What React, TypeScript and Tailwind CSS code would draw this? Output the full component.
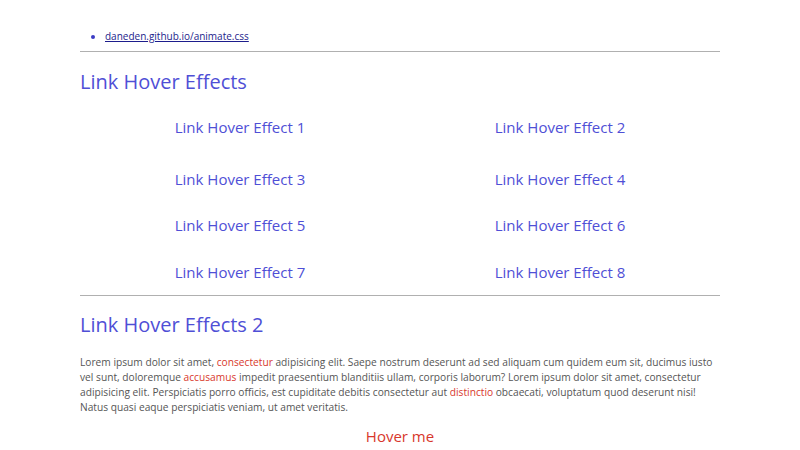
import React from 'react';

const effects = [1, 2, 3, 4, 5, 6, 7, 8];

// rows are not evenly spaced on the demo page, each row keeps its own height
const rowHeights = ['h-[52px]', 'h-[46px]', 'h-[47px]', 'h-[46px]'];

export default function App() {
  const rows = [0, 1, 2, 3].map(i => effects.slice(i * 2, i * 2 + 2));

  return (
    <div className="min-h-[450px] bg-white font-['Open_Sans',sans-serif] overflow-hidden">
      <div className="w-[640px] mx-auto">
        <ul className="list-disc pl-[25px] pt-[28px] text-[10px] leading-[16px] text-[#3b3bc4] marker:text-[#3b3bc4]">
          <li>
            <a href="#" className="underline text-[#1d1d8c]">daneden.github.io/animate.css</a>
          </li>
        </ul>
        <hr className="mt-[7px] border-t border-[#b0b0b0]" />

        <h2 className="mt-[16px] text-[20px] leading-[28px] text-[#4f4fd6]">Link Hover Effects</h2>

        <div className="mt-[20px]">
          {rows.map((pair, i) => (
            <div key={i} className={`grid grid-cols-2 ${rowHeights[i]}`}>
              {pair.map(n => (
                <div key={n} className="flex justify-center">
                  <a href="#" className="text-[15px] leading-[22px] text-[#4f4fd6]">
                    Link Hover Effect {n}
                  </a>
                </div>
              ))}
            </div>
          ))}
        </div>

        <hr className="mt-[-12px] border-t border-[#b0b0b0]" />

        <h2 className="mt-[15px] text-[20px] leading-[28px] text-[#4f4fd6]">Link Hover Effects 2</h2>

        <p className="mt-[16px] text-[10.2px] leading-[15px] text-[#555]">
          Lorem ipsum dolor sit amet, <a href="#" className="text-[#d8372c]">consectetur</a> adipisicing elit. Saepe
          nostrum deserunt ad sed aliquam cum quidem eum sit, ducimus iusto vel sunt, doloremque{' '}
          <a href="#" className="text-[#d8372c]">accusamus</a> impedit praesentium blanditiis ullam, corporis laborum?
          Lorem ipsum dolor sit amet, consectetur adipisicing elit. Perspiciatis porro officis, est cupiditate debitis
          consectetur aut <a href="#" className="text-[#d8372c]">distinctio</a> obcaecati, voluptatum quod deserunt nisi!
          Natus quasi eaque perspiciatis veniam, ut amet veritatis.
        </p>

        <div className="mt-[10px] flex justify-center">
          <a href="#" className="text-[15px] leading-[22px] text-[#d8372c]">Hover me</a>
        </div>
      </div>
    </div>
  );
}
